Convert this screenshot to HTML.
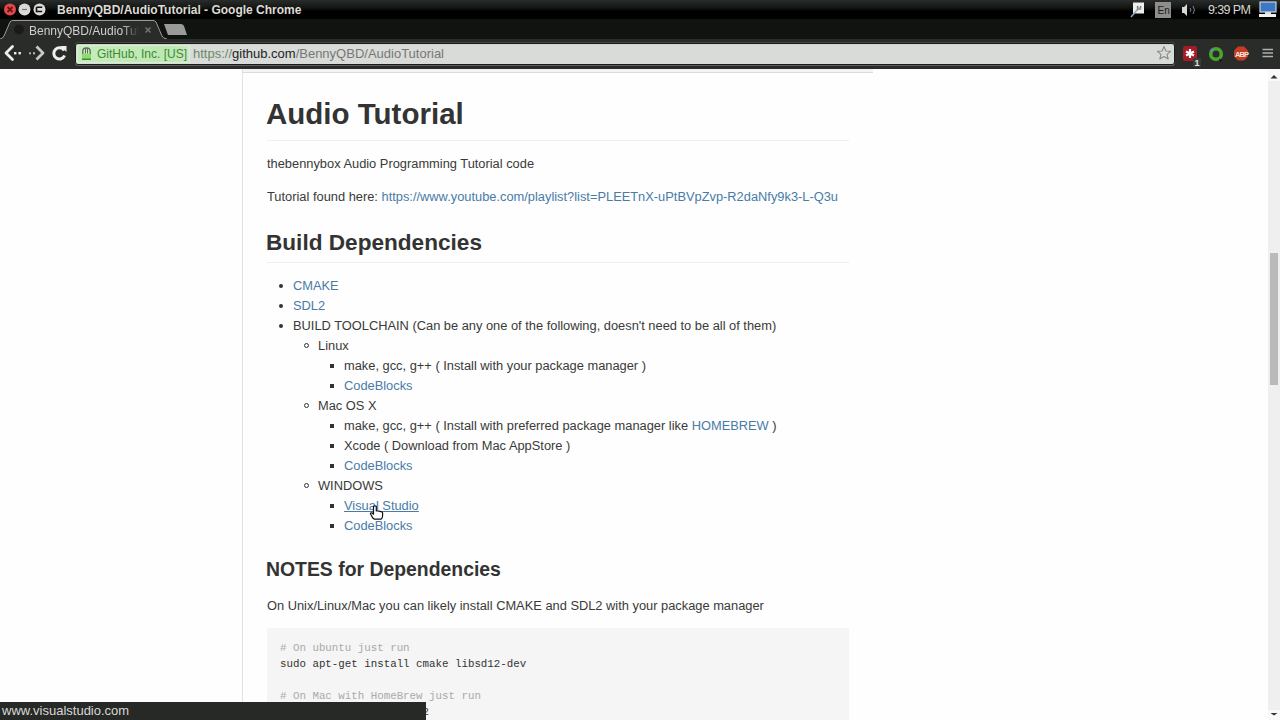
<!DOCTYPE html>
<html><head><meta charset="utf-8">
<style>
*{margin:0;padding:0;box-sizing:border-box}
html,body{width:1280px;height:720px;overflow:hidden;background:#fff;font-family:"Liberation Sans",sans-serif}
.abs{position:absolute}
#panel{left:0;top:0;width:1280px;height:19px;background:linear-gradient(#282c2a 0,#161816 7px,#010101 11px,#000 19px)}
#tabstrip{left:0;top:19px;width:1280px;height:20px;background:#111311}
#toolbar{left:0;top:39px;width:1280px;height:30px;background:#2a2c29}
#content{left:0;top:69px;width:1280px;height:651px;background:#fdfefd;overflow:hidden}
.t{position:absolute;white-space:nowrap;color:#3a3a3a;font-size:12.85px;line-height:16px}
.a{color:#4a7ba8}
.h{font-weight:bold;color:#333;position:absolute;white-space:nowrap}
.hr{position:absolute;height:1px;background:#eee}
.b{position:absolute;width:4px;height:4px;border-radius:50%;background:#333}
.c{position:absolute;width:5px;height:5px;border-radius:50%;border:1px solid #333}
.s{position:absolute;width:4px;height:4px;background:#333}
.m{position:absolute;white-space:nowrap;font-family:"Liberation Mono",monospace;font-size:10.8px;line-height:16px;color:#333}
</style></head><body>

<div id="panel" class="abs"></div>
<svg class="abs" style="left:0;top:0" width="60" height="20">
 <circle cx="10" cy="9.5" r="6" fill="#df4a4a"/>
 <path d="M7.5 7 L12.5 12 M12.5 7 L7.5 12" stroke="#7a1010" stroke-width="1.8"/>
 <circle cx="24.5" cy="9.5" r="6" fill="#d9d9d6"/>
 <path d="M22 9.5 H27" stroke="#777" stroke-width="1.2"/>
 <circle cx="39.5" cy="9.5" r="6" fill="#dcdcd9"/>
 <path d="M36.5 7.3 H42.2 M36.5 7.3 V11.5 H42.2" stroke="#111" stroke-width="1.6" fill="none"/>
</svg>
<div class="abs" style="left:57px;top:3px;font-size:12px;font-weight:bold;color:#dedbd4;white-space:nowrap;line-height:14px">BennyQBD/AudioTutorial - Google Chrome</div>
<!-- indicators -->
<svg class="abs" style="left:1128px;top:0" width="152" height="20">
 <rect x="5" y="2.5" width="11" height="11" fill="#eeeeea"/>
 <path d="M3 17 L10 9" stroke="#8fa6c0" stroke-width="1.5"/>
 <text x="8.5" y="10" font-size="6" fill="#333" font-family="Liberation Sans">M</text>
 <rect x="27" y="2" width="16" height="16" fill="#8e8e8c"/>
 <text x="29.5" y="13.5" font-size="10" fill="#1a1a1a" font-family="Liberation Sans">En</text>
 <path d="M54 7 H56 L59 4 V16 L56 13 H54 Z" fill="#d8d8d4"/>
 <path d="M62 8 Q64 10 62 12 M65 6 Q68 10 65 14" stroke="#7083a0" stroke-width="1" fill="none"/>
 <rect x="132" y="2" width="16" height="10" fill="#3d78c8" stroke="#c8d0d8" stroke-width="1.2"/>
 <rect x="137" y="12" width="6" height="2" fill="#ddd"/>
 <rect x="131" y="14" width="17" height="3" fill="#eee"/>
</svg>
<div class="abs" style="left:1208px;top:3px;font-size:12.5px;color:#d9d6cf;white-space:nowrap;line-height:14px;letter-spacing:-0.6px">9:39 PM</div>

<div id="tabstrip" class="abs"></div>
<svg class="abs" style="left:0;top:19px" width="200" height="22">
 <path d="M0 20.5 Q3 19.5 4 17 L10 3 Q11 1.5 13 1.5 L153 1.5 Q155 1.5 156 3 L162 17 Q163 19.5 167 20.5 Z" fill="#2a2c29"/><path d="M0 20 Q3 19.5 4 17 L10 3 Q11 1.5 13 1.5 L153 1.5 Q155 1.5 156 3 L162 17 Q163 19.5 167 20" fill="none" stroke="#9a9a98" stroke-width="1"/>
 <rect x="0" y="20" width="200" height="2" fill="#2a2c29"/>
 <circle cx="19" cy="10.5" r="5" fill="#1a1a1a"/>
 <path d="M164 5 H181 Q183 5 184 7 L187 16 H168 Z" fill="#9a9a98"/>
 <path d="M145.5 8.5 L150.5 13.5 M150.5 8.5 L145.5 13.5" stroke="#777" stroke-width="1.4"/>
</svg>
<div class="abs" style="left:29px;top:24px;font-size:12px;color:#cfcfcc;white-space:nowrap;line-height:14px;width:110px;overflow:hidden;-webkit-mask-image:linear-gradient(90deg,#000 85%,transparent)">BennyQBD/AudioTutorial</div>

<div id="toolbar" class="abs"></div>
<svg class="abs" style="left:0;top:40px" width="75" height="29">
 <path d="M12.5 6.5 L6 13 L12.5 19.5" stroke="#eeeeea" stroke-width="2.8" fill="none" stroke-linecap="round" stroke-linejoin="round"/>
 <rect x="14" y="12" width="2.4" height="2.4" fill="#eee"/><rect x="18.5" y="12" width="2.4" height="2.4" fill="#eee"/>
 <path d="M36.5 6.5 L43 13 L36.5 19.5" stroke="#c8c8c4" stroke-width="2.8" fill="none" stroke-linejoin="round"/>
 <rect x="29" y="12.3" width="2" height="2" fill="#aaa"/><rect x="33" y="12.3" width="2" height="2" fill="#bbb"/>
 <path d="M64.2 10.5 A5.6 5.6 0 1 0 64.6 15.5" stroke="#eeeeea" stroke-width="3" fill="none"/>
 <path d="M60.5 6 L66.5 6 L66.5 12 Z" fill="#eeeeea"/>
</svg>
<!-- omnibox -->
<div class="abs" style="left:75px;top:43px;width:1100px;height:22px;border:1px solid #1a1c19;border-radius:3px;background:#d9dbd8;box-shadow:0 -1px 0 #434542,0 1px 0 #5c5e5b,inset 0 1px 0 #cfd1ce"></div>
<div class="abs" style="left:77px;top:45px;width:113px;height:18px;background:linear-gradient(90deg,#c6ecbc,#bde8b2 85%,#d2e6cd);border-radius:1px;box-shadow:inset 0 0 0 1px #d8efd2"></div>
<svg class="abs" style="left:80px;top:45px" width="14" height="18">
 <path d="M2.8 9 V6 Q2.8 3 6.5 3 Q10.2 3 10.2 6 V9" stroke="#5a6a58" stroke-width="1.3" fill="none"/>
 <path d="M5.5 4 V8.5 M7.5 4 V8.5" stroke="#5a6a58" stroke-width="1"/>
 <rect x="2" y="9" width="9" height="4.5" fill="#8fdc6a"/>
 <rect x="2" y="13.5" width="9" height="1.4" fill="#3c7a30"/>
</svg>
<div class="abs" style="left:97px;top:47px;font-size:12px;color:#3c8a34;white-space:nowrap;line-height:14px">GitHub, Inc. [US]</div>
<div class="abs" style="left:193px;top:47px;font-size:13px;color:#777;white-space:nowrap;line-height:14px"><span style="color:#6a8a66">https://</span><span style="color:#222">github.com</span>/BennyQBD/AudioTutorial</div>
<svg class="abs" style="left:1156px;top:45px" width="16" height="16">
 <path d="M8 1.5 L9.9 6 L14.6 6.3 L11 9.4 L12.2 14 L8 11.5 L3.8 14 L5 9.4 L1.4 6.3 L6.1 6 Z" fill="none" stroke="#8a8a88" stroke-width="1.1" stroke-linejoin="round"/>
</svg>
<svg class="abs" style="left:1178px;top:42px" width="102" height="26">
 <rect x="5" y="4" width="14" height="15" rx="2" fill="#a51b27"/>
 <path d="M12 7 V16 M8 9.5 L16 13.5 M16 9.5 L8 13.5" stroke="#fff" stroke-width="2.2"/>
 <rect x="15" y="16" width="8" height="9" fill="#3a3a38"/>
 <text x="16.5" y="24" font-size="9" font-weight="bold" fill="#e0e0e0" font-family="Liberation Sans">1</text>
 <circle cx="38" cy="12" r="5.3" fill="none" stroke="#4aa52c" stroke-width="3.6"/>
 <path d="M41 16.5 L44.5 18.5 L42 19.5 Z" fill="#111"/>
 <circle cx="34" cy="8" r="1.6" fill="#6080d8"/>
 <path d="M60 4.5 H66 L70 8.5 V14.5 L66 18.5 H60 L56 14.5 V8.5 Z" fill="#c63c22"/>
 <text x="57" y="14.8" font-size="7.5" font-weight="bold" fill="#f6e4dc" font-family="Liberation Sans" letter-spacing="-0.9">ABP</text>
 <path d="M84.5 7.5 H95 M84.5 11 H95 M84.5 14.5 H95" stroke="#b0b0ae" stroke-width="1.4"/>
</svg>

<div id="content" class="abs">
</div>
<!-- readme box -->
<div class="abs" style="left:242px;top:69px;width:1px;height:651px;background:#e2e2e2"></div>
<div class="abs" style="left:243px;top:69px;width:630px;height:3px;background:#f2f3f2"></div>
<div class="abs" style="left:243px;top:72px;width:630px;height:1px;background:#dadbda"></div>

<div class="h" style="left:266px;top:98px;font-size:29.5px;line-height:32px">Audio Tutorial</div>
<div class="hr" style="left:267px;top:140px;width:582px"></div>
<div class="t" style="left:267px;top:156px">thebennybox Audio Programming Tutorial code</div>
<div class="t" style="left:267px;top:189px">Tutorial found here: <span class="a">https://www.youtube.com/playlist?list=PLEETnX-uPtBVpZvp-R2daNfy9k3-L-Q3u</span></div>
<div class="h" style="left:266px;top:230px;font-size:22.6px;line-height:26px">Build Dependencies</div>
<div class="hr" style="left:267px;top:262px;width:582px"></div>

<div class="b" style="left:279px;top:284px"></div><div class="t a" style="left:293px;top:278px">CMAKE</div>
<div class="b" style="left:279px;top:304px"></div><div class="t a" style="left:293px;top:298px">SDL2</div>
<div class="b" style="left:279px;top:324px"></div><div class="t" style="left:293px;top:318px">BUILD TOOLCHAIN (Can be any one of the following, doesn't need to be all of them)</div>
<div class="c" style="left:304px;top:343px"></div><div class="t" style="left:318px;top:338px">Linux</div>
<div class="s" style="left:330px;top:364px"></div><div class="t" style="left:344px;top:358px">make, gcc, g++ ( Install with your package manager )</div>
<div class="s" style="left:330px;top:384px"></div><div class="t a" style="left:344px;top:378px">CodeBlocks</div>
<div class="c" style="left:304px;top:403px"></div><div class="t" style="left:318px;top:398px">Mac OS X</div>
<div class="s" style="left:330px;top:424px"></div><div class="t" style="left:344px;top:418px">make, gcc, g++ ( Install with preferred package manager like <span class="a">HOMEBREW</span> )</div>
<div class="s" style="left:330px;top:444px"></div><div class="t" style="left:344px;top:438px">Xcode ( Download from Mac AppStore )</div>
<div class="s" style="left:330px;top:464px"></div><div class="t a" style="left:344px;top:458px">CodeBlocks</div>
<div class="c" style="left:304px;top:483px"></div><div class="t" style="left:318px;top:478px">WINDOWS</div>
<div class="s" style="left:330px;top:504px"></div><div class="t a" style="left:344px;top:498px;text-decoration:underline">Visual Studio</div>
<div class="s" style="left:330px;top:524px"></div><div class="t a" style="left:344px;top:518px">CodeBlocks</div>

<div class="h" style="left:266px;top:558px;font-size:19.4px;line-height:22px">NOTES for Dependencies</div>
<div class="t" style="left:267px;top:598px">On Unix/Linux/Mac you can likely install CMAKE and SDL2 with your package manager</div>

<div class="abs" style="left:267px;top:628px;width:582px;height:92px;background:#f4f5f4"></div>
<div class="m" style="left:280px;top:640px;color:#aaa">#&nbsp;On ubuntu just run</div>
<div class="m" style="left:280px;top:656px">sudo apt-get install cmake libsd12-dev</div>
<div class="m" style="left:280px;top:688px;color:#aaa"># On Mac with HomeBrew just run</div>
<div class="m" style="left:280px;top:704px">brew install cmake sdl2</div>

<!-- scrollbar -->
<div class="abs" style="left:1268px;top:69px;width:12px;height:651px;background:#eeefee"></div>
<div class="abs" style="left:1270px;top:253px;width:8px;height:132px;background:#b9bab9"></div>


<svg class="abs" style="left:368px;top:505px" width="18" height="16">
 <path d="M5.5 1.2 Q7 0.5 8.3 1.2 V6 Q9.5 5.4 10.5 6.2 Q11.8 5.8 12.6 6.7 Q14.2 6.4 14.6 7.8 V10.8 Q14.6 13.2 13 14.2 H6.3 Q4.6 13.2 3.8 11.2 L2.5 8.8 Q2.3 7.6 3.8 7.8 L5.5 9.2 Z" fill="#fff" stroke="#111" stroke-width="1.2" stroke-linejoin="round"/>
</svg>
<svg class="abs" style="left:1268px;top:69px" width="12" height="651">
 <rect x="0" y="0" width="12" height="12" fill="#f8f9f8"/><path d="M2.5 9.5 L6 6 L9.5 9.5 Z" fill="#333"/>
 <rect x="0" y="641" width="12" height="10" fill="#f8f9f8"/><path d="M2.5 644 L6 646.5 L9.5 644 Z" fill="#333"/>
</svg>
<!-- status bubble -->
<div class="abs" style="left:0;top:702px;width:426px;height:18px;background:#272927"></div>
<div class="abs" style="left:2px;top:703px;font-size:13px;line-height:15px;color:#d8d8d6;white-space:nowrap">www.visualstudio.com</div>
</body></html>
